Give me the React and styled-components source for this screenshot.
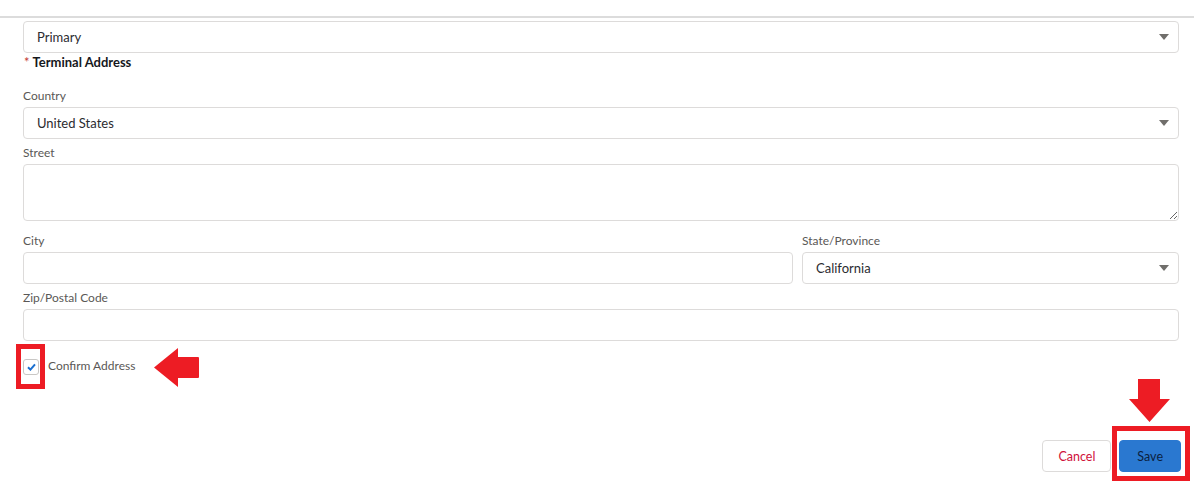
import React from "react";
import styled, { createGlobalStyle } from "styled-components";

const GlobalStyle = createGlobalStyle`
  body {
    margin: 0;
    background: #fff;
    font-family: Lato, "Liberation Sans", sans-serif;
  }
`;

const annotationRed = "#ed1c24";

const Page = styled.div`
  width: 1194px;
  height: 485px;
  overflow: hidden;
  background: #fff;
`;

const TopRule = styled.div`
  margin-top: 16px;
  height: 2px;
  background: #dcdcdc;
`;

const Form = styled.div`
  padding: 0 15px 0 23px;
`;

const Field = styled.div`
  margin-top: ${(p) => p.gap || 0}px;
`;

const Label = styled.div`
  font-size: 12px;
  line-height: 18px;
  color: #5a5856;
  margin-bottom: 2px;
`;

const SectionTitle = styled.div`
  font-size: 13px;
  font-weight: 700;
  line-height: 18px;
  color: #16181c;
`;

const Required = styled.abbr`
  color: #c23934;
  text-decoration: none;
  margin: 0 3px 0 1px;
  font-weight: 400;
`;

const SelectWrap = styled.div`
  position: relative;
  margin-top: ${(p) => p.gap || 0}px;
`;

const Select = styled.select`
  appearance: none;
  width: 100%;
  height: 32px;
  box-sizing: border-box;
  border: 1px solid #dddbda;
  border-radius: 4px;
  background: #fff;
  padding: 0 30px 0 13px;
  font-family: inherit;
  font-size: 13px;
  color: #2b2b30;
  outline: none;
`;

const Caret = styled.span`
  position: absolute;
  right: 10px;
  top: 13px;
  width: 0;
  height: 0;
  border-left: 5px solid transparent;
  border-right: 5px solid transparent;
  border-top: 6px solid #706e6b;
  pointer-events: none;
`;

const Input = styled.input`
  display: block;
  width: 100%;
  height: 32px;
  box-sizing: border-box;
  border: 1px solid #dddbda;
  border-radius: 4px;
  padding: 0 13px;
  font-family: inherit;
  font-size: 13px;
  outline: none;
`;

const TextArea = styled.textarea`
  display: block;
  width: 100%;
  height: 57px;
  box-sizing: border-box;
  border: 1px solid #dddbda;
  border-radius: 4px;
  padding: 6px 13px;
  font-family: inherit;
  font-size: 13px;
  resize: vertical;
  outline: none;
`;

const Row = styled.div`
  display: grid;
  grid-template-columns: 1fr 377px;
  column-gap: 9px;
  margin-top: 11px;
`;

const CheckRow = styled.label`
  position: relative;
  display: flex;
  align-items: center;
  gap: 9px;
  margin-top: 18px;
  height: 16px;
  font-size: 12px;
  line-height: 14px;
  color: #5a5856;
`;

const CheckText = styled.span`
  margin-top: -3px;
`;

const Box = styled.span`
  width: 16px;
  height: 16px;
  box-sizing: border-box;
  border: 1px solid #c9c7c5;
  border-radius: 3px;
  background: #fff;
  display: flex;
  align-items: center;
  justify-content: center;
`;

const Highlight = styled.span`
  position: absolute;
  left: ${(p) => p.x}px;
  top: ${(p) => p.y}px;
  width: ${(p) => p.w}px;
  height: ${(p) => p.h}px;
  box-sizing: border-box;
  border: 5px solid ${annotationRed};
  pointer-events: none;
`;

const Arrow = styled.svg`
  position: absolute;
  left: ${(p) => p.x}px;
  top: ${(p) => p.y}px;
`;

const Footer = styled.div`
  display: flex;
  justify-content: flex-end;
  gap: 8px;
  margin-top: 65px;
  padding-right: 13px;
`;

const Button = styled.button`
  position: relative;
  height: 32px;
  box-sizing: border-box;
  padding: 0 ${(p) => (p.primary ? 17 : 15)}px;
  border-radius: 4px;
  border: 1px solid ${(p) => (p.primary ? "#2a78d0" : "#dddbda")};
  background: ${(p) => (p.primary ? "#2a78d0" : "#fff")};
  color: ${(p) => (p.primary ? "#0b1f3f" : "#d0103a")};
  font-family: inherit;
  font-size: 12.5px;
  cursor: pointer;
`;

const SelectField = ({ value, gap }) => (
  <SelectWrap gap={gap}>
    <Select defaultValue={value}>
      <option>{value}</option>
    </Select>
    <Caret />
  </SelectWrap>
);

export default function App() {
  return (
    <Page>
      <GlobalStyle />
      <TopRule />
      <Form>
        <SelectField value="Primary" gap={3} />
        <SectionTitle>
          <Required title="required">*</Required>Terminal Address
        </SectionTitle>

        <Field gap={16}>
          <Label>Country</Label>
          <SelectField value="United States" />
        </Field>

        <Field gap={5}>
          <Label>Street</Label>
          <TextArea />
        </Field>

        <Row>
          <div>
            <Label>City</Label>
            <Input />
          </div>
          <div>
            <Label>State/Province</Label>
            <SelectField value="California" />
          </div>
        </Row>

        <Field gap={5}>
          <Label>Zip/Postal Code</Label>
          <Input />
        </Field>

        <CheckRow>
          <Box>
            <svg width="9" height="8" viewBox="0 0 9 8">
              <path d="M1 4.3 L3.4 6.6 L8 1.3" fill="none" stroke="#1b6fd0" strokeWidth="2" />
            </svg>
          </Box>
          <CheckText>Confirm Address</CheckText>
          <Highlight x={-7} y={-15} w={29} h={45} />
          <Arrow x={131} y={-11} width="46" height="39" viewBox="0 0 46 39">
            <path d="M0 19.5 L24 0 L24 9 L44 9 Q45 9 45 10 L45 29 Q45 30 44 30 L24 30 L24 39 Z" fill={annotationRed} />
          </Arrow>
        </CheckRow>
      </Form>

      <Footer>
        <Button>Cancel</Button>
        <Button primary>
          Save
          <Highlight x={-8} y={-15} w={78} h={55} />
          <Arrow x={9} y={-62} width="42" height="43" viewBox="0 0 42 43">
            <path d="M9 0 L31 0 L31 20 L41 20 L20.5 43 L0 20 L9 20 Z" fill={annotationRed} />
          </Arrow>
        </Button>
      </Footer>
    </Page>
  );
}
